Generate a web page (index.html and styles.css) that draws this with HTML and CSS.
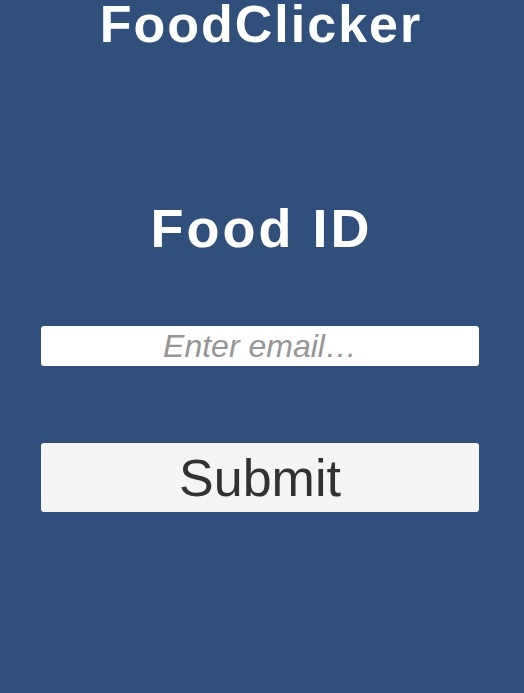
FILE: index.html
```html
<!DOCTYPE html>
<html lang="en">
<head>
    <meta charset="utf-8" />
    <title>FoodClicker</title>
    <meta name="viewport" content="width=device-width, initial-scale=1" />
    <link rel="stylesheet" href="styles.css">
</head>
<body>
<div class="screen">
    <h1 class="title">FoodClicker</h1>
    <h2 class="heading">Food ID</h2>
    <input type="text" class="email" placeholder="Enter email&hellip;" />
    <button class="submit">Submit</button>
</div>
</body>
</html>
```

FILE: styles.css
```css
html, body {
    margin: 0; padding: 0; height: 100%;
    background-color: #314f7b;
    font-family: "Liberation Sans", Arial, sans-serif;
}
.screen {
    display: flex; flex-direction: column; align-items: center;
    padding: 0 45px 0 41px;
}
.title {
    margin: 0; font-size: 52px; line-height: 0.93;
    letter-spacing: 2px; color: #fff; font-weight: bold;
    padding-left: 2px;
}
.heading {
    margin: 153px 0 0; font-size: 54px; line-height: 1;
    letter-spacing: 3px; color: #fff; font-weight: bold;
    padding-left: 3px;
}
.email {
    box-sizing: border-box; width: 438px; height: 40px; margin-top: 71px;
    border: 0; border-radius: 3px; background: #fff;
    font: italic 32px "Liberation Sans", Arial, sans-serif;
    text-align: center; color: #333; padding: 0;
}
.email::placeholder { color: #969696; }
.submit {
    box-sizing: border-box; width: 438px; height: 69px; margin-top: 77px;
    border: 0; border-radius: 3px; background: #f5f5f5;
    font: 52px "Liberation Sans", Arial, sans-serif; color: #323232;
    padding: 0;
}
```
